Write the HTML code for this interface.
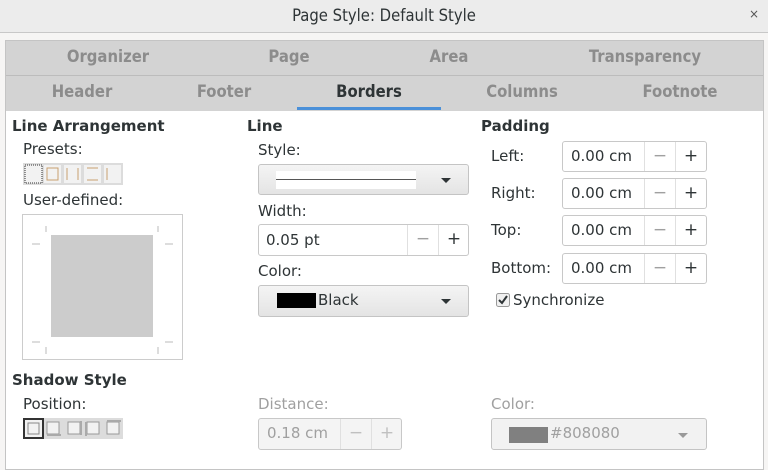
<!DOCTYPE html>
<html><head><meta charset="utf-8"><style>
*{box-sizing:border-box;margin:0;padding:0}
body{width:768px;height:461px;overflow:hidden;background:#f6f5f4;font-family:"DejaVu Sans","Liberation Sans",sans-serif;font-size:15px;color:#2e3436;position:relative}
.a{position:absolute;white-space:nowrap}
.title{left:0;top:0;width:768px;height:33px;background:#ececec;border-bottom:1px solid #c8c8c8;text-align:center;line-height:32px;font-family:"DejaVu Sans Condensed","DejaVu Sans",sans-serif;font-size:16.5px;color:#2e3436}
.frame{left:5px;top:40px;width:759px;height:430px;border:1px solid #c4c4c4;background:#fff}
.tabs{left:6px;top:41px;width:757px;height:70px;background:#d3d3d3}
.tab{position:absolute;font-family:"DejaVu Sans Condensed","DejaVu Sans",sans-serif;font-weight:bold;font-size:16.5px;color:#8c8c8c;transform:translateX(-50%);white-space:nowrap}
.b{font-weight:bold}
.box{position:absolute;border:1px solid #c8c8c8;border-radius:3px;background:#fff}
.btn{position:absolute;border:1px solid #c4c4c4;border-radius:3px;background:linear-gradient(#f4f4f4,#e4e4e4)}
.arr{position:absolute;width:0;height:0;border-left:5px solid transparent;border-right:5px solid transparent;border-top:5px solid #2e3436}
.sp{position:absolute;top:0;bottom:0;width:31px;border-left:1px solid #e0e0e0;text-align:center;line-height:29px;font-size:17px}
.g{color:#a0a0a0}
</style></head><body>
<div class="a title">Page Style: Default Style</div>
<div class="a" style="right:9px;top:7px;font-size:12px;color:#555">×</div>
<div class="a frame"></div>
<div class="a tabs">
 <div style="position:absolute;left:0;top:34px;width:757px;height:1px;background:#bcbcbc"></div>
 <div class="tab" style="left:102px;top:6px">Organizer</div>
 <div class="tab" style="left:283px;top:6px">Page</div>
 <div class="tab" style="left:443px;top:6px">Area</div>
 <div class="tab" style="left:639px;top:6px">Transparency</div>
 <div class="tab" style="left:76px;top:41px">Header</div>
 <div class="tab" style="left:218px;top:41px">Footer</div>
 <div class="tab" style="left:363px;top:41px;color:#2e3436">Borders</div>
 <div class="tab" style="left:516px;top:41px">Columns</div>
 <div class="tab" style="left:674px;top:41px">Footnote</div>
 <div style="position:absolute;left:291px;top:66px;width:144px;height:3px;background:#4a90d9"></div>
</div>

<div class="a b" style="left:12px;top:117px">Line Arrangement</div>
<div class="a" style="left:23px;top:140px">Presets:</div>
<svg class="a" style="left:23px;top:163px" width="100" height="22">
 <rect x="0" y="0" width="100" height="22" fill="#dcdcdc"/>
 <rect x="2" y="2" width="17" height="18" fill="#f2f2f2" stroke="#333" stroke-dasharray="1,1"/>
 <rect x="21" y="2" width="17" height="18" fill="#f2f2f2"/><rect x="24" y="5" width="11" height="12" fill="none" stroke="#c8a070"/>
 <rect x="41" y="2" width="17" height="18" fill="#f2f2f2"/><line x1="44" y1="5" x2="44" y2="17" stroke="#c8a070"/><line x1="55" y1="5" x2="55" y2="17" stroke="#c8a070"/>
 <rect x="61" y="2" width="17" height="18" fill="#f2f2f2"/><line x1="64" y1="5" x2="75" y2="5" stroke="#c8a070"/><line x1="64" y1="17" x2="75" y2="17" stroke="#c8a070"/>
 <rect x="81" y="2" width="17" height="18" fill="#f2f2f2"/><line x1="84" y1="5" x2="84" y2="17" stroke="#c8a070"/>
</svg>
<div class="a" style="left:23px;top:191px">User-defined:</div>
<svg class="a" style="left:22px;top:214px" width="161" height="146">
 <rect x="0.5" y="0.5" width="160" height="145" fill="#fff" stroke="#ccc"/>
 <rect x="29" y="21" width="102" height="102" fill="#cccccc"/>
 <g stroke="#bbb"><line x1="24" y1="12" x2="24" y2="18"/><line x1="136" y1="12" x2="136" y2="18"/><line x1="10" y1="30" x2="18" y2="30"/><line x1="143" y1="30" x2="151" y2="30"/><line x1="10" y1="128" x2="18" y2="128"/><line x1="143" y1="128" x2="151" y2="128"/><line x1="24" y1="133" x2="24" y2="140"/><line x1="136" y1="133" x2="136" y2="140"/></g>
</svg>
<div class="a b" style="left:12px;top:371px">Shadow Style</div>
<div class="a" style="left:23px;top:395px">Position:</div>
<svg class="a" style="left:23px;top:418px" width="100" height="21">
 <rect x="0" y="0" width="100" height="21" fill="#dcdcdc"/>
 <rect x="1" y="1" width="19" height="19" fill="#f2f2f2" stroke="#333" stroke-width="2"/><rect x="5" y="5" width="11" height="11" fill="none" stroke="#888"/>
 <g fill="#f2f2f2" stroke="#999"><rect x="24" y="4" width="12" height="12"/><rect x="45" y="4" width="12" height="12"/><rect x="64" y="4" width="12" height="12"/><rect x="84" y="4" width="12" height="12"/></g>
 <g fill="#aaa"><rect x="24" y="16" width="14" height="2"/><rect x="57" y="3" width="2" height="14"/><rect x="62" y="4" width="2" height="14"/><rect x="84" y="2" width="14" height="2"/></g>
</svg>

<div class="a b" style="left:247px;top:117px">Line</div>
<div class="a" style="left:258px;top:141px">Style:</div>
<div class="btn" style="left:258px;top:164px;width:211px;height:31px"><div style="position:absolute;left:17px;top:6px;width:140px;height:18px;background:#fff"><div style="position:absolute;left:0;right:0;top:8px;height:1px;background:#555"></div></div><div class="arr" style="left:182px;top:13px"></div></div>
<div class="a" style="left:258px;top:202px">Width:</div>
<div class="box" style="left:258px;top:224px;width:211px;height:32px"><div class="a" style="left:7px;top:6px">0.05 pt</div><div class="sp g" style="left:148px">−</div><div class="sp" style="left:179px">+</div></div>
<div class="a" style="left:258px;top:262px">Color:</div>
<div class="btn" style="left:258px;top:285px;width:211px;height:32px"><div style="position:absolute;left:18px;top:7px;width:39px;height:15px;background:#000"></div><div class="a" style="left:59px;top:5px">Black</div><div class="arr" style="left:182px;top:13px"></div></div>

<div class="a b" style="left:481px;top:117px">Padding</div>
<div class="a" style="left:491px;top:147px">Left:</div>
<div class="a" style="left:491px;top:184px">Right:</div>
<div class="a" style="left:491px;top:221px">Top:</div>
<div class="a" style="left:491px;top:259px">Bottom:</div>
<div class="box" style="left:562px;top:141px;width:145px;height:31px"><div class="a" style="left:8px;top:5px">0.00 cm</div><div class="sp g" style="left:81px">−</div><div class="sp" style="left:112px">+</div></div>
<div class="box" style="left:562px;top:178px;width:145px;height:31px"><div class="a" style="left:8px;top:5px">0.00 cm</div><div class="sp g" style="left:81px">−</div><div class="sp" style="left:112px">+</div></div>
<div class="box" style="left:562px;top:215px;width:145px;height:31px"><div class="a" style="left:8px;top:5px">0.00 cm</div><div class="sp g" style="left:81px">−</div><div class="sp" style="left:112px">+</div></div>
<div class="box" style="left:562px;top:253px;width:145px;height:31px"><div class="a" style="left:8px;top:5px">0.00 cm</div><div class="sp g" style="left:81px">−</div><div class="sp" style="left:112px">+</div></div>
<svg class="a" style="left:496px;top:293px" width="14" height="14"><rect x="0.5" y="0.5" width="13" height="13" rx="2" fill="#f0f0f0" stroke="#999"/><path d="M3 7 L6 10 L11 3" stroke="#2e3436" stroke-width="2" fill="none"/></svg>
<div class="a" style="left:513px;top:291px">Synchronize</div>

<div class="a g" style="left:258px;top:395px">Distance:</div>
<div class="box" style="left:258px;top:418px;width:144px;height:32px;background:#f4f4f4"><div class="a g" style="left:8px;top:5px">0.18 cm</div><div class="sp g" style="left:81px;color:#c0c0c0">−</div><div class="sp g" style="left:112px;color:#c0c0c0">+</div></div>
<div class="a g" style="left:491px;top:395px">Color:</div>
<div class="btn" style="left:491px;top:418px;width:216px;height:32px;background:#f2f2f2"><div style="position:absolute;left:17px;top:8px;width:39px;height:16px;background:#808080"></div><div class="a g" style="left:58px;top:5px">#808080</div><div class="arr" style="left:186px;top:14px;border-top-color:#999"></div></div>
</body></html>
